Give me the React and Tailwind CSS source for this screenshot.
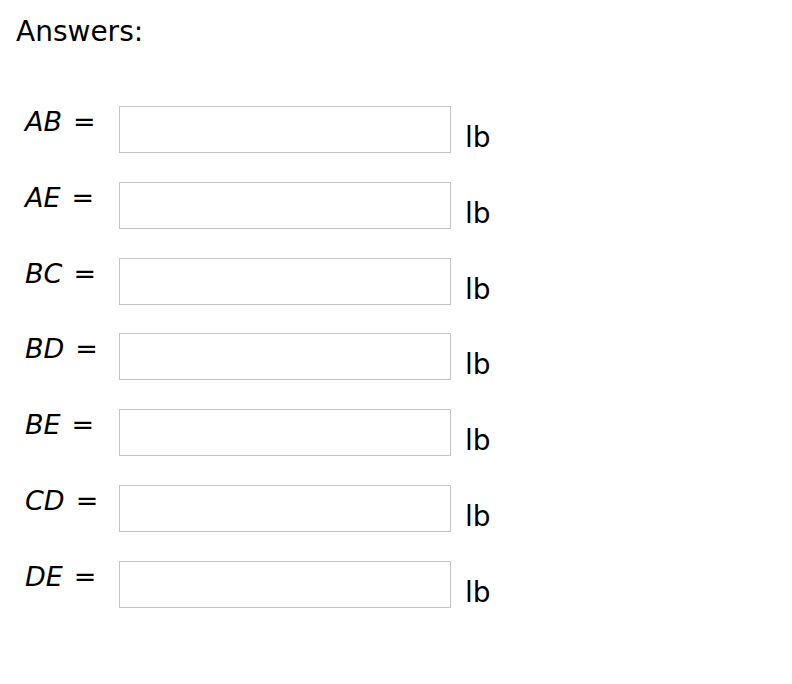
export default function App() {
  const rows = ['AB', 'AE', 'BC', 'BD', 'BE', 'CD', 'DE'];
  return (
    <div className="min-h-screen bg-white text-black" style={{ fontFamily: '"DejaVu Sans", Verdana, sans-serif' }}>
      <div className="pl-4 pt-[13px]">
        <h2 className="text-[28px] leading-[38px] font-normal">Answers:</h2>
        <div className="mt-[55px] flex flex-col gap-[28.8px]">
          {rows.map((r) => (
            <div key={r} className="flex items-start h-[47px]">
              <div className="w-[103px] pl-[9px] text-[27px] leading-[32px] whitespace-nowrap">
                <i>{r}</i>
                <span className="ml-[11px]">=</span>
              </div>
              <div className="w-[332px] h-[47px] border border-[#c4c4c4] bg-white" />
              <div className="pl-[14px] pt-[16px] text-[28px] leading-[32px]">lb</div>
            </div>
          ))}
        </div>
      </div>
    </div>
  );
}
